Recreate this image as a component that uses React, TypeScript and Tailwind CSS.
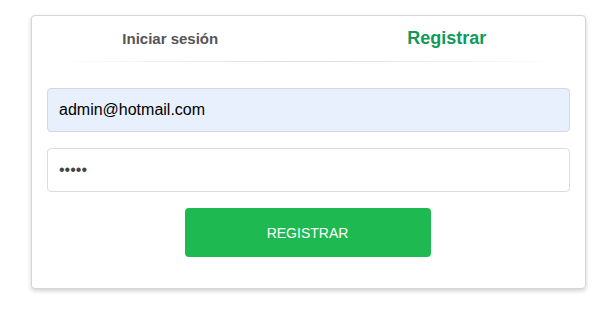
import { useState } from 'react';

const App = () => {
  const [email, setEmail] = useState('admin@hotmail.com');
  const [password, setPassword] = useState('12345');

  return (
    <div className="min-h-[309px] bg-white pt-[15px] font-['Liberation_Sans',Arial,sans-serif]">
      <div className="ml-[31px] w-[555px] h-[274px] bg-white border border-[#d6d6d6] rounded-[4px] shadow-[0_2px_4px_rgba(0,0,0,0.18)]">
        <div className="flex h-[45px]">
          <button className="w-1/2 flex items-center justify-center pt-[1px] text-[15px] font-bold text-[#555]">
            Iniciar sesión
          </button>
          <button className="w-1/2 flex items-center justify-center text-[18px] font-bold text-[#11995a]">
            Registrar
          </button>
        </div>
        <div className="mx-[20px] h-[1px] bg-gradient-to-r from-transparent via-[#dcdcdc] to-transparent"></div>
        <form
          action=""
          className="flex flex-col gap-4 px-[15px] pt-[26px]"
          onSubmit={(e) => e.preventDefault()}
        >
          <input
            type="email"
            value={email}
            onChange={(e) => setEmail(e.target.value)}
            className="w-full h-[44px] px-[11px] rounded-[4px] border border-[#d4d8de] bg-[#e8f0fe] text-[16px] text-black outline-none"
          />
          <input
            type="password"
            value={password}
            onChange={(e) => setPassword(e.target.value)}
            className="w-full h-[44px] px-[11px] rounded-[4px] border border-[#dcdcdc] bg-white text-[16px] text-[#444] outline-none"
          />
          <div className="flex justify-center pr-[2px]">
            <button
              type="submit"
              className="w-[246px] h-[49px] pt-[1px] rounded-[4px] bg-[#1eb950] text-white text-[14px] uppercase"
            >
              Registrar
            </button>
          </div>
        </form>
      </div>
    </div>
  );
};

export default App;
